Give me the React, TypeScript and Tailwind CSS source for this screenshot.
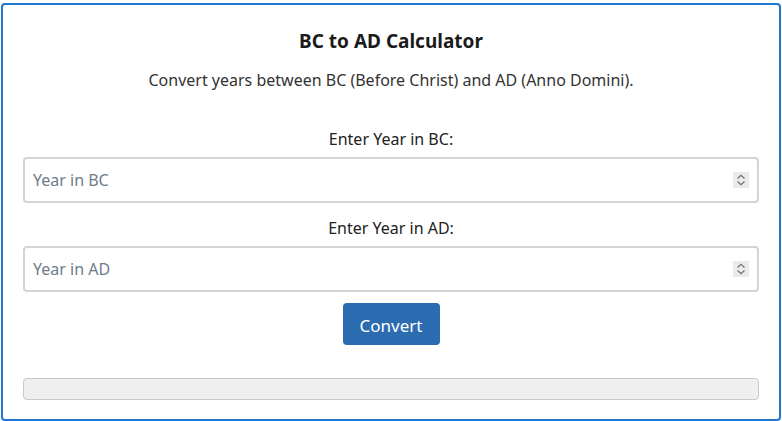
import React from "react";

function Spinner() {
  return (
    <div className="absolute right-[10px] top-1/2 -translate-y-1/2 w-[16px] h-[16px] bg-[#ebebeb] flex items-center justify-center">
      <svg width="12" height="14" viewBox="0 0 12 14" fill="none" stroke="#707070" strokeWidth="1.2">
        <path d="M2.5 5.5 L6 2.2 L9.5 5.5" />
        <path d="M2.5 8.5 L6 11.8 L9.5 8.5" />
      </svg>
    </div>
  );
}

function YearField({ label, placeholder, labelGap }: { label: string; placeholder: string; labelGap: string }) {
  return (
    <>
      <label className={`block text-center text-[16px] leading-[24px] text-[#222] ${labelGap}`}>{label}</label>
      <div className="relative mt-[6px]">
        <input
          type="text"
          placeholder={placeholder}
          className="w-full h-[46px] border-2 border-[#d4d4d4] rounded-[4px] px-2 text-[16px] text-[#222] placeholder:text-[#6f7c8a] outline-none"
        />
        <Spinner />
      </div>
    </>
  );
}

export default function App() {
  return (
    <div
      className="w-[782px] h-[421px] bg-white pt-[3px] pl-[1px]"
      style={{ fontFamily: '"Noto Sans", "Open Sans", Arial, sans-serif' }}
    >
      <div className="w-[780px] h-[418px] border-2 border-[#1e78d2] rounded-[4px] px-5 flex flex-col">
        <h1 className="mt-[23px] text-center text-[19px] leading-[27px] font-bold text-[#1b1b1b]">
          BC to AD Calculator
        </h1>
        <p className="mt-[13px] text-center text-[16px] leading-[24px] text-[#333]">
          Convert years between BC (Before Christ) and AD (Anno Domini).
        </p>
        <YearField label="Enter Year in BC:" placeholder="Year in BC" labelGap="mt-[35px]" />
        <YearField label="Enter Year in AD:" placeholder="Year in AD" labelGap="mt-[13px]" />
        <div className="mt-[11px] flex justify-center">
          <button className="w-[97px] h-[42px] rounded-[4px] bg-[#2b6cb0] text-white text-[17px] leading-[42px] pt-[2px]">
            Convert
          </button>
        </div>
        <div className="mt-[33px] h-[22px] bg-[#efefef] border border-[#c9c9c9] rounded-[4px]" />
      </div>
    </div>
  );
}
